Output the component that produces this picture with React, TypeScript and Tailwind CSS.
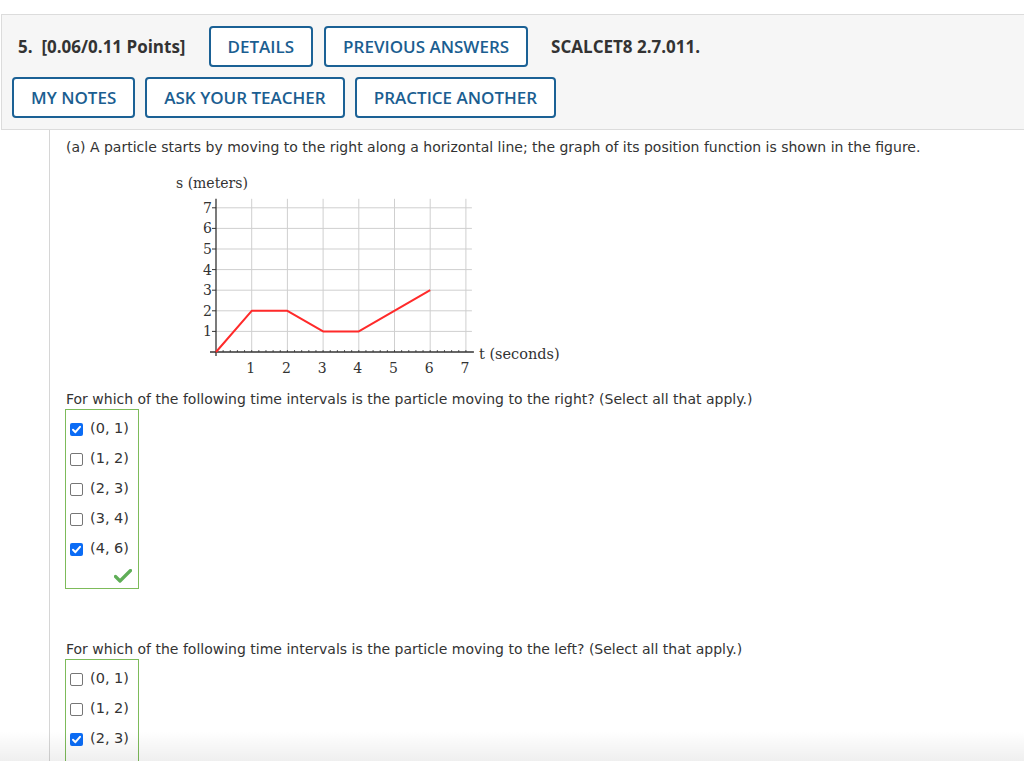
import React from "react";

const headFont = { fontFamily: '"Open Sans", "Liberation Sans", sans-serif' };
const bodyFont = { fontFamily: '"DejaVu Sans", Verdana, sans-serif' };

function HeaderButton({ label }: { label: string }) {
  return (
    <button
      className="h-[41px] px-[17px] rounded-[4px] border-2 border-[#1b6195] bg-white text-[17px] font-semibold text-[#1b5e91]"
      style={headFont}
    >
      {label}
    </button>
  );
}

function Box({ checked }: { checked: boolean }) {
  if (checked) {
    return (
      <span className="w-[13px] h-[13px] rounded-[2px] bg-[#0b6cf5] flex items-center justify-center">
        <svg width="11" height="11" viewBox="0 0 11 11">
          <path d="M2 5.8 L4.4 8.2 L9 2.8" fill="none" stroke="#fff" strokeWidth="2" strokeLinecap="round" strokeLinejoin="round" />
        </svg>
      </span>
    );
  }
  return <span className="w-[13px] h-[13px] rounded-[2px] border border-[#767676] bg-white" />;
}

function Option({ label, checked }: { label: string; checked: boolean }) {
  return (
    <div className="h-[30px] flex items-center gap-[7px] pl-[4px]">
      <Box checked={checked} />
      <span className="text-[14.5px] text-[#333]" style={bodyFont}>
        {label}
      </span>
    </div>
  );
}

function Graph() {
  const ox = 46;
  const oy = 181;
  const ux = 35.7;
  const uy = 20.6;
  const X = (t: number) => ox + t * ux;
  const Y = (s: number) => oy - s * uy;
  const nums = [1, 2, 3, 4, 5, 6, 7];
  const minor: number[] = [];
  for (let i = 1; i < 36; i++) minor.push(i * 0.2);
  const pts = [
    [0, 0],
    [1, 2],
    [2, 2],
    [3, 1],
    [4, 1],
    [6, 3],
  ]
    .map(([t, s]) => `${X(t)},${Y(s)}`)
    .join(" ");
  const serif = '"DejaVu Serif", "Liberation Serif", serif';
  return (
    <svg width="400" height="208" viewBox="0 0 400 208">
      {nums.map((n) => (
        <line key={"v" + n} x1={X(n)} y1={Y(7) - 9} x2={X(n)} y2={oy} stroke="#cfcfcf" strokeWidth="1" />
      ))}
      {nums.map((n) => (
        <line key={"h" + n} x1={ox} y1={Y(n)} x2={X(7) + 6} y2={Y(n)} stroke="#cfcfcf" strokeWidth="1" />
      ))}
      <line x1={ox - 6} y1={oy} x2={X(7) + 8} y2={oy} stroke="#333" strokeWidth="1.3" />
      <line x1={ox} y1={Y(7) - 9} x2={ox} y2={oy + 4} stroke="#333" strokeWidth="1.3" />
      {minor.map((m) => (
        <line key={"m" + m} x1={X(m)} y1={oy - 2} x2={X(m)} y2={oy} stroke="#333" strokeWidth="0.8" />
      ))}
      {nums.map((n) => (
        <line key={"yt" + n} x1={ox - 4} y1={Y(n)} x2={ox} y2={Y(n)} stroke="#333" strokeWidth="1" />
      ))}
      <polyline points={pts} fill="none" stroke="#ff2a2a" strokeWidth="2" strokeLinejoin="round" />
      {nums.map((n) => (
        <text key={"yl" + n} x={ox - 4} y={Y(n) + 5} textAnchor="end" fontSize="14" fill="#333" fontFamily={serif}>
          {n}
        </text>
      ))}
      {nums.map((n) => (
        <text key={"xl" + n} x={X(n) - 1} y={oy + 21} textAnchor="middle" fontSize="14" fill="#333" fontFamily={serif}>
          {n}
        </text>
      ))}
      <text x="6" y="17" fontSize="14" fill="#333" fontFamily={serif}>
        s (meters)
      </text>
      <text x="309" y="188" fontSize="14.5" fill="#333" fontFamily={serif}>
        t (seconds)
      </text>
    </svg>
  );
}

function CheckMark() {
  return (
    <svg width="18" height="14" viewBox="0 0 18 14">
      <path d="M1.5 7.5 L6 12 L16.5 1.5" fill="none" stroke="#5fae57" strokeWidth="3.2" strokeLinecap="round" strokeLinejoin="round" />
    </svg>
  );
}

export default function App() {
  const first = [
    ["(0, 1)", true],
    ["(1, 2)", false],
    ["(2, 3)", false],
    ["(3, 4)", false],
    ["(4, 6)", true],
  ] as const;
  const second = [
    ["(0, 1)", false],
    ["(1, 2)", false],
    ["(2, 3)", true],
    ["(3, 4)", false],
    ["(4, 6)", false],
  ] as const;

  return (
    <div className="w-[1024px] h-[761px] overflow-hidden bg-white relative">
      <div className="mt-[14px] ml-px border border-r-0 border-[#dcdcdc] bg-[#f6f6f6] pl-[10px] pt-[11px] pb-[11px] flex flex-col gap-[10px]">
        <div className="flex items-center gap-[11px]">
          <span className="ml-[6px] mr-[12px] text-[17px] font-bold text-[#333]" style={headFont}>
            5.&nbsp; [0.06/0.11 Points]
          </span>
          <HeaderButton label="DETAILS" />
          <HeaderButton label="PREVIOUS ANSWERS" />
          <span className="ml-[12px] text-[17px] font-bold text-[#333]" style={headFont}>
            SCALCET8 2.7.011.
          </span>
        </div>
        <div className="flex items-center gap-[10px]">
          <HeaderButton label="MY NOTES" />
          <HeaderButton label="ASK YOUR TEACHER" />
          <HeaderButton label="PRACTICE ANOTHER" />
        </div>
      </div>

      <div className="ml-[49px] border-l border-[#d6d6d6] pl-[16px] h-[700px]" style={bodyFont}>
        <p className="pt-[7px] text-[14px] text-[#333] leading-[20px]">
          (a) A particle starts by moving to the right along a horizontal line; the graph of its position function is shown in the figure.
        </p>
        <div className="ml-[104px] mt-[14px]">
          <Graph />
        </div>
        <p className="mt-[10px] text-[14px] text-[#333] leading-[20px]">
          For which of the following time intervals is the particle moving to the right? (Select all that apply.)
        </p>
        <div className="w-[74px] -ml-px border border-[#7dbb5a] pt-[4px] pb-[5px]">
          {first.map(([l, c]) => (
            <Option key={l} label={l} checked={c} />
          ))}
          <div className="flex justify-end pr-[6px] pt-[5px]">
            <CheckMark />
          </div>
        </div>
        <p className="mt-[50px] text-[14px] text-[#333] leading-[20px]">
          For which of the following time intervals is the particle moving to the left? (Select all that apply.)
        </p>
        <div className="w-[74px] -ml-px border border-[#7dbb5a] pt-[4px] pb-[4px]">
          {second.map(([l, c]) => (
            <Option key={l} label={l} checked={c} />
          ))}
        </div>
      </div>

      <div className="pointer-events-none absolute left-0 right-0 bottom-0 h-[30px] bg-gradient-to-b from-transparent to-[#00000010]" />
    </div>
  );
}
